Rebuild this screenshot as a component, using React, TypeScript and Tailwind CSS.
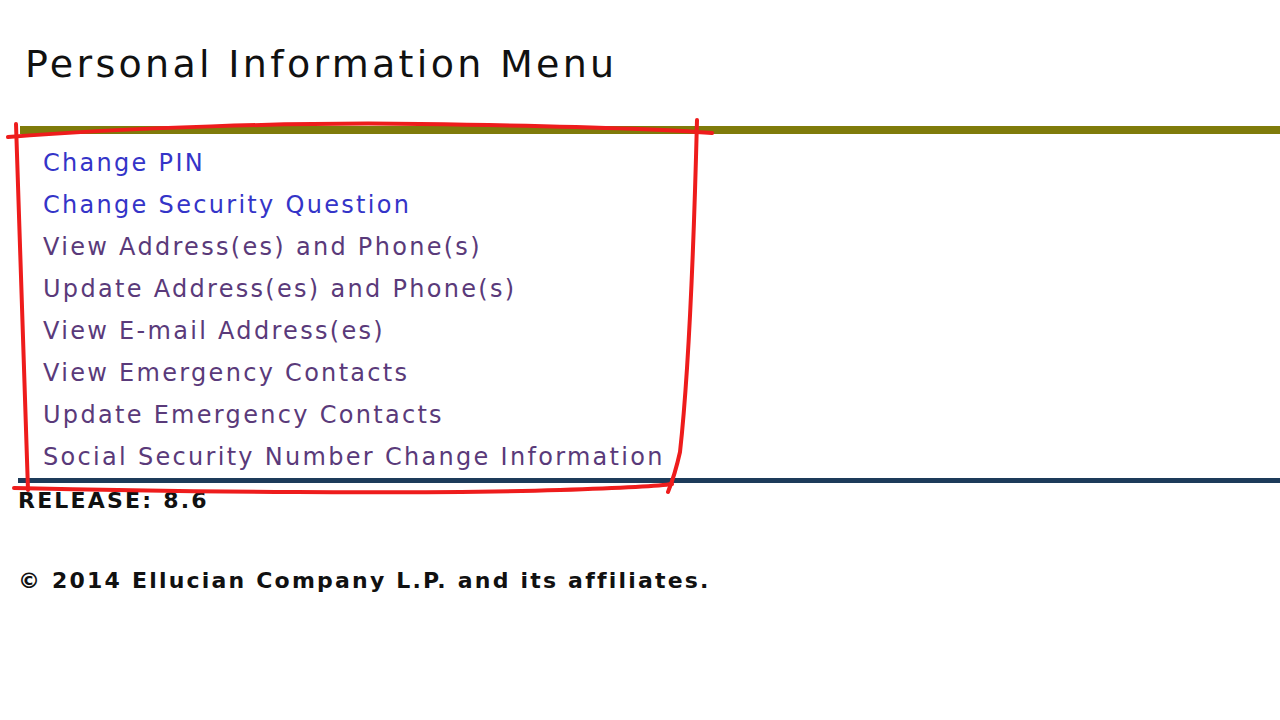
const links = [
  { label: "Change PIN", visited: false },
  { label: "Change Security Question", visited: false },
  { label: "View Address(es) and Phone(s)", visited: true },
  { label: "Update Address(es) and Phone(s)", visited: true },
  { label: "View E-mail Address(es)", visited: true },
  { label: "View Emergency Contacts", visited: true },
  { label: "Update Emergency Contacts", visited: true },
  { label: "Social Security Number Change Information", visited: true },
];

// hand-drawn red box someone put over the screenshot
function Scribble() {
  return (
    <svg
      className="pointer-events-none absolute left-0 top-0"
      width="1280"
      height="720"
      viewBox="0 0 1280 720"
      fill="none"
    >
      <g stroke="#ee1c1c" strokeWidth="4" strokeLinecap="round" strokeLinejoin="round">
        <path d="M8 137 C 120 128, 300 122, 420 124 C 560 126, 650 128, 712 133" />
        <path d="M16 124 C 20 240, 24 360, 28 490" />
        <path d="M697 120 C 694 240, 688 380, 680 452 C 676 470, 672 482, 668 492" />
        <path d="M14 488 C 180 492, 420 494, 560 490 C 620 488, 660 486, 672 484" />
      </g>
    </svg>
  );
}

export default function App() {
  return (
    <div
      className="relative h-[720px] w-[1280px] overflow-hidden bg-white"
      style={{ fontFamily: '"DejaVu Sans", Verdana, sans-serif' }}
    >
      <h1 className="pl-[25px] pt-[38px] text-[38px] leading-[52px] font-normal tracking-[3.3px] text-[#111]">
        Personal Information Menu
      </h1>

      <div className="mt-[36px] ml-[20px] h-[8px] bg-[#7f7b0a]" />

      <ul className="pl-[43px] pt-[8px]">
        {links.map((l) => (
          <li key={l.label} className="h-[42px] leading-[42px]">
            <a
              href="#"
              className={
                l.visited
                  ? "text-[24px] tracking-[2.3px] text-[#5a3a7a]"
                  : "text-[24px] tracking-[2.3px] text-[#3434c8]"
              }
            >
              {l.label}
            </a>
          </li>
        ))}
      </ul>

      <div className="ml-[18px] h-[5px] bg-[#1d3b5a]" />

      <div className="pl-[18px] text-[22px] font-bold tracking-[2.2px] text-[#111]">
        <p className="pt-[4px] leading-[28px]">RELEASE: 8.6</p>
        <p className="pt-[52px] leading-[28px]">© 2014 Ellucian Company L.P. and its affiliates.</p>
      </div>

      <Scribble />
    </div>
  );
}
